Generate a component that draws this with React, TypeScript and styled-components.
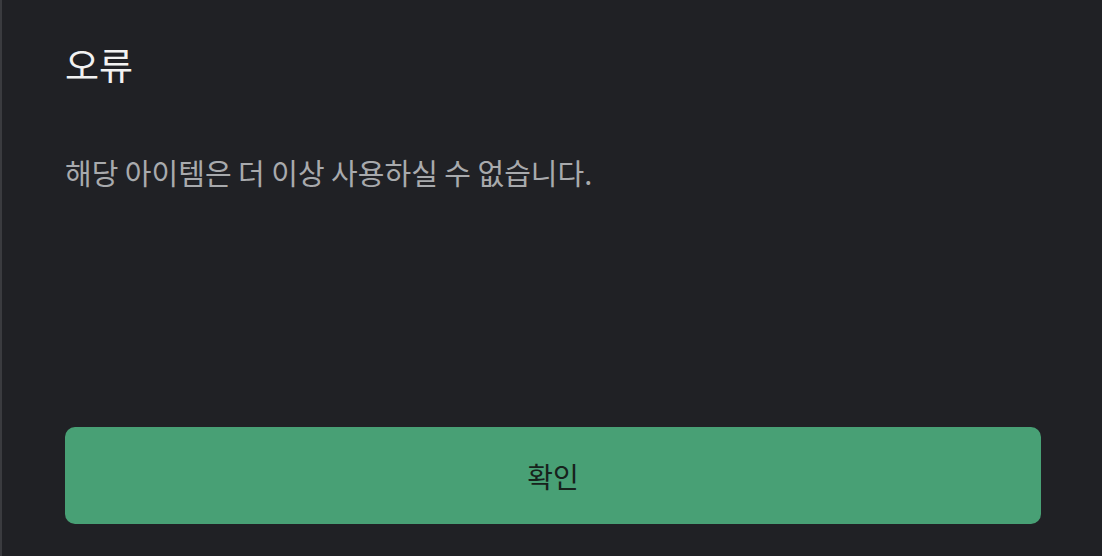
import styled, { createGlobalStyle } from "styled-components";

const GlobalStyle = createGlobalStyle`
  html, body {
    margin: 0;
    padding: 0;
    background: #202125;
  }
  body {
    font-family: "Noto Sans CJK KR", "Noto Sans", sans-serif;
  }
`;

const Dialog = styled.div`
  box-sizing: border-box;
  height: 100vh;
  display: flex;
  flex-direction: column;
  background: #202125;
  border-left: 2px solid #3a3b3f;
  padding: 42px 61px 32px 63px;
`;

const Title = styled.h1`
  margin: 0;
  font-size: 37px;
  font-weight: 400;
  line-height: 1.2;
  color: #f2f2f2;
`;

const Message = styled.p`
  margin: 66px 0 0;
  font-size: 29px;
  font-weight: 400;
  line-height: 1.4;
  color: #a8aaad;
`;

const Spacer = styled.div`
  flex: 1;
`;

const ConfirmButton = styled.button`
  height: 97px;
  width: 100%;
  border: none;
  border-radius: 10px;
  background: #48a075;
  color: #17221c;
  font-family: inherit;
  font-size: 28px;
  font-weight: 400;
  cursor: pointer;
`;

const App = () => {
  return (
    <>
      <GlobalStyle />
      <Dialog>
        <Title>오류</Title>
        <Message>해당 아이템은 더 이상 사용하실 수 없습니다.</Message>
        <Spacer />
        <ConfirmButton>확인</ConfirmButton>
      </Dialog>
    </>
  );
};

export default App;
